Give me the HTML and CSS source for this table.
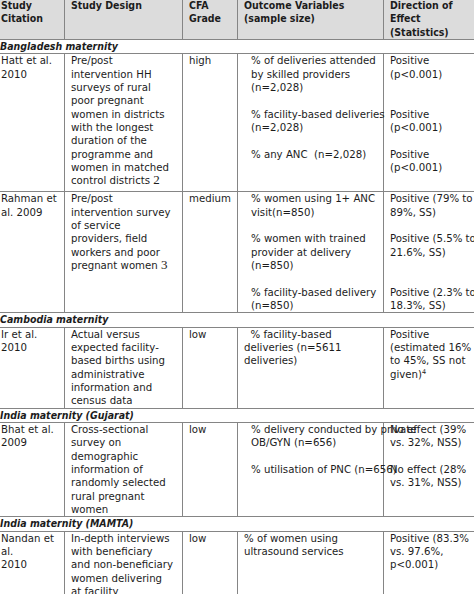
FILE: index.html
```html
<!DOCTYPE html>
<html lang="en">
<head>
<meta charset="utf-8">
<title>Study table</title>
<link rel="stylesheet" href="styles.css">
</head>
<body>
<table class="grid">
  <colgroup>
    <col class="c1"><col class="c2"><col class="c3"><col class="c4"><col class="c5">
  </colgroup>
  <thead>
    <tr class="head">
      <th>Study<br>Citation</th>
      <th>Study Design</th>
      <th>CFA<br>Grade</th>
      <th>Outcome Variables<br>(sample size)</th>
      <th>Direction of<br>Effect<br>(Statistics)</th>
    </tr>
  </thead>
  <tbody>
    <tr class="band"><td colspan="5">Bangladesh maternity</td></tr>
    <tr class="row-hatt">
      <td>Hatt et al.<br>2010</td>
      <td>Pre/post<br>intervention HH<br>surveys of rural<br>poor pregnant<br>women in districts<br>with the longest<br>duration of the<br>programme and<br>women in matched<br>control districts <span class="note">2</span></td>
      <td>high</td>
      <td class="ind">% of deliveries attended<br>by skilled providers<br>(n=2,028)<br><br>% facility-based deliveries<br>(n=2,028)<br><br>% any ANC&nbsp; (n=2,028)</td>
      <td>Positive<br>(p&lt;0.001)<br><br><br>Positive<br>(p&lt;0.001)<br><br>Positive<br>(p&lt;0.001)</td>
    </tr>
    <tr>
      <td>Rahman et<br>al. 2009</td>
      <td>Pre/post<br>intervention survey<br>of service<br>providers, field<br>workers and poor<br>pregnant women <span class="note">3</span></td>
      <td>medium</td>
      <td class="ind">% women using 1+ ANC<br>visit(n=850)<br><br>% women with trained<br>provider at delivery<br>(n=850)<br><br>% facility-based delivery<br>(n=850)</td>
      <td>Positive (79% to<br>89%, SS)<br><br>Positive (5.5% to<br>21.6%, SS)<br><br><br>Positive (2.3% to<br>18.3%, SS)</td>
    </tr>
    <tr class="band"><td colspan="5">Cambodia maternity</td></tr>
    <tr>
      <td>Ir et al.<br>2010</td>
      <td>Actual versus<br>expected facility-<br>based births using<br>administrative<br>information and<br>census data</td>
      <td>low</td>
      <td><span class="ti">% facility-based</span><br>deliveries (n=5611<br>deliveries)</td>
      <td>Positive<br>(estimated 16%<br>to 45%, SS not<br>given)<sup class="sup">4</sup></td>
    </tr>
    <tr class="band"><td colspan="5">India maternity (Gujarat)</td></tr>
    <tr>
      <td>Bhat et al.<br>2009</td>
      <td>Cross-sectional<br>survey on<br>demographic<br>information of<br>randomly selected<br>rural pregnant<br>women</td>
      <td>low</td>
      <td class="ind">% delivery conducted by private<br>OB/GYN (n=656)<br><br>% utilisation of PNC (n=656)</td>
      <td>No effect (39%<br>vs. 32%, NSS)<br><br>No effect (28%<br>vs. 31%, NSS)</td>
    </tr>
    <tr class="band"><td colspan="5">India maternity (MAMTA)</td></tr>
    <tr>
      <td>Nandan et<br>al.<br>2010</td>
      <td>In-depth interviews<br>with beneficiary<br>and non-beneficiary<br>women delivering<br>at facility</td>
      <td>low</td>
      <td>% of women using<br>ultrasound services</td>
      <td>Positive (83.3%<br>vs. 97.6%,<br>p&lt;0.001)</td>
    </tr>
  </tbody>
</table>
</body>
</html>
```
FILE: styles.css
```css
html, body {
  margin: 0;
  padding: 0;
  background: #ffffff;
  overflow: hidden;
}

body {
  width: 474px;
  height: 594px;
}

.grid {
  border-collapse: collapse;
  table-layout: fixed;
  width: 526px;
  margin-left: -6px;
  margin-top: -2px;
  font-family: "DejaVu Sans", Verdana, sans-serif;
  font-size: 10.2px;
  line-height: 13.33px;
  color: #1c1c1c;
}

.c1 { width: 70px; }
.c2 { width: 118px; }
.c3 { width: 55px; }
.c4 { width: 146px; }
.c5 { width: 137px; }

.grid th,
.grid td {
  border: 1px solid #858585;
  padding: 0 4px 0 6px;
  vertical-align: top;
  text-align: left;
  white-space: nowrap;
  overflow: visible;
}

.head th {
  background: #dcdcdc;
  font-family: "DejaVu Sans Condensed", "DejaVu Sans", sans-serif;
  font-weight: bold;
  font-size: 10.5px;
  height: 40px;
}

.band td {
  font-family: "DejaVu Sans Condensed", "DejaVu Sans", sans-serif;
  font-weight: bold;
  font-style: italic;
  font-size: 10.5px;
  height: 13px;
  padding-left: 5px;
}

.row-hatt td {
  height: 137px;
}

.grid td.ind {
  padding-left: 13px;
}

.ti {
  padding-left: 6.5px;
}

.note {
  font-family: "Liberation Serif", "Times New Roman", serif;
  font-size: 13px;
  line-height: 0;
}

.sup {
  font-size: 6.5px;
  line-height: 0;
  vertical-align: 4px;
}
```
